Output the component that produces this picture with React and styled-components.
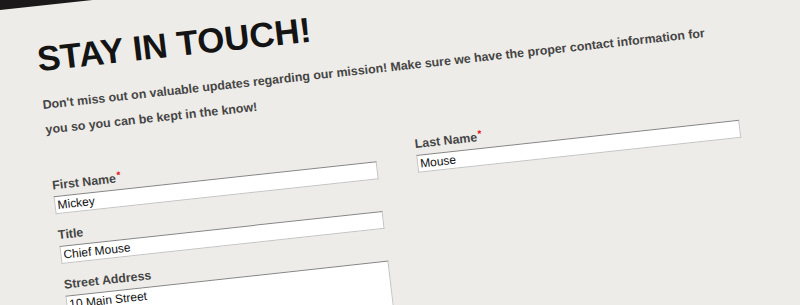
import React from 'react';
import styled, { createGlobalStyle } from 'styled-components';

const GlobalStyle = createGlobalStyle`
  html, body {
    margin: 0;
    padding: 0;
    background: #eeece8;
  }
  body {
    font-family: "Liberation Sans", Arial, Helvetica, sans-serif;
    overflow: hidden;
  }
`;

const Viewport = styled.div`
  width: 800px;
  height: 305px;
  overflow: hidden;
  background: #eeece8;
`;

// the whole page is shot at a slight angle
const Page = styled.div`
  width: 900px;
  padding-left: 30px;
  box-sizing: border-box;
  transform-origin: 0 0;
  transform: matrix(0.994, -0.108, 0.118, 0.993, 0, 0);
`;

const TopBar = styled.div`
  height: 10px;
  margin-left: -80px;
  background: #1b1919;
`;

const Heading = styled.h1`
  margin: 32.5px 0 0;
  font-size: 34.8px;
  line-height: 40px;
  font-weight: 700;
  color: #141414;
`;

const Intro = styled.p`
  margin: 14.6px 0 0;
  width: 680px;
  font-size: 12.4px;
  line-height: 25px;
  font-weight: 700;
  color: #454545;
`;

const FormGrid = styled.div`
  display: grid;
  grid-template-columns: 325px 325px;
  column-gap: 40px;
  margin-top: 31px;
  align-items: start;
`;

const Column = styled.div`
  display: flex;
  flex-direction: column;
  margin-top: ${p => p.$shift || 0}px;
`;

const Field = styled.div`
  display: flex;
  flex-direction: column;
  margin-bottom: 12px;
`;

const Label = styled.label`
  font-size: 12.4px;
  line-height: 18px;
  font-weight: 700;
  color: #454545;
  margin-bottom: 2px;
`;

const Required = styled.span`
  color: #e01010;
  font-size: 10px;
  vertical-align: 4px;
  margin-left: 1px;
`;

const TextInput = styled.input`
  box-sizing: border-box;
  width: 100%;
  height: 18px;
  margin: 0;
  padding: 0 2px;
  font-family: "Liberation Sans", Arial, sans-serif;
  font-size: 12px;
  color: #111;
  background: #fff;
  border: 1px solid #c4c4c4;
  border-top-color: #858585;
  border-radius: 0;
  outline: none;
`;

const TextArea = styled.textarea`
  box-sizing: border-box;
  width: 100%;
  height: 80px;
  margin: 0;
  padding: 1px 2px;
  font-family: "Liberation Sans", Arial, sans-serif;
  font-size: 12px;
  line-height: 15px;
  color: #111;
  background: #fff;
  border: 1px solid #c4c4c4;
  border-top-color: #858585;
  border-radius: 0;
  resize: none;
  outline: none;
`;

const FormField = ({ label, required, value, multiline }) => (
  <Field>
    <Label>
      {label}
      {required && <Required>*</Required>}
    </Label>
    {multiline
      ? <TextArea defaultValue={value} />
      : <TextInput type="text" defaultValue={value} />}
  </Field>
);

export default function App() {
  return (
    <>
      <GlobalStyle />
      <Viewport>
        <Page>
          <TopBar />
          <Heading>STAY IN TOUCH!</Heading>
          <Intro>
            Don't miss out on valuable updates regarding our mission! Make sure we have the proper contact information for you so you can be kept in the know!
          </Intro>
          <FormGrid>
            <Column>
              <FormField label="First Name" required value="Mickey" />
              <FormField label="Title" value="Chief Mouse" />
              <FormField label="Street Address" value="10 Main Street" multiline />
            </Column>
            <Column $shift={-2}>
              <FormField label="Last Name" required value="Mouse" />
            </Column>
          </FormGrid>
        </Page>
      </Viewport>
    </>
  );
}
